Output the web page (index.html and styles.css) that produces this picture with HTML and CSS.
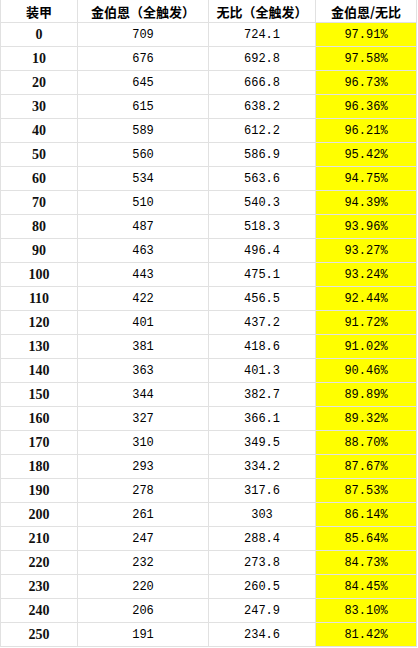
FILE: index.html
```html
<!DOCTYPE html>
<html lang="zh">
<head>
<meta charset="utf-8">
<title>装甲对比</title>
<link rel="stylesheet" href="styles.css">
</head>
<body>
<div class="sheet">
  <div class="cell head">装甲</div><div class="cell head">金伯恩（全触发）</div><div class="cell head">无比（全触发）</div><div class="cell head">金伯恩/无比</div>
  <div class="cell arm">0</div><div class="cell num">709</div><div class="cell num">724.1</div><div class="cell num pct">97.91%</div>
  <div class="cell arm">10</div><div class="cell num">676</div><div class="cell num">692.8</div><div class="cell num pct">97.58%</div>
  <div class="cell arm">20</div><div class="cell num">645</div><div class="cell num">666.8</div><div class="cell num pct">96.73%</div>
  <div class="cell arm">30</div><div class="cell num">615</div><div class="cell num">638.2</div><div class="cell num pct">96.36%</div>
  <div class="cell arm">40</div><div class="cell num">589</div><div class="cell num">612.2</div><div class="cell num pct">96.21%</div>
  <div class="cell arm">50</div><div class="cell num">560</div><div class="cell num">586.9</div><div class="cell num pct">95.42%</div>
  <div class="cell arm">60</div><div class="cell num">534</div><div class="cell num">563.6</div><div class="cell num pct">94.75%</div>
  <div class="cell arm">70</div><div class="cell num">510</div><div class="cell num">540.3</div><div class="cell num pct">94.39%</div>
  <div class="cell arm">80</div><div class="cell num">487</div><div class="cell num">518.3</div><div class="cell num pct">93.96%</div>
  <div class="cell arm">90</div><div class="cell num">463</div><div class="cell num">496.4</div><div class="cell num pct">93.27%</div>
  <div class="cell arm">100</div><div class="cell num">443</div><div class="cell num">475.1</div><div class="cell num pct">93.24%</div>
  <div class="cell arm">110</div><div class="cell num">422</div><div class="cell num">456.5</div><div class="cell num pct">92.44%</div>
  <div class="cell arm">120</div><div class="cell num">401</div><div class="cell num">437.2</div><div class="cell num pct">91.72%</div>
  <div class="cell arm">130</div><div class="cell num">381</div><div class="cell num">418.6</div><div class="cell num pct">91.02%</div>
  <div class="cell arm">140</div><div class="cell num">363</div><div class="cell num">401.3</div><div class="cell num pct">90.46%</div>
  <div class="cell arm">150</div><div class="cell num">344</div><div class="cell num">382.7</div><div class="cell num pct">89.89%</div>
  <div class="cell arm">160</div><div class="cell num">327</div><div class="cell num">366.1</div><div class="cell num pct">89.32%</div>
  <div class="cell arm">170</div><div class="cell num">310</div><div class="cell num">349.5</div><div class="cell num pct">88.70%</div>
  <div class="cell arm">180</div><div class="cell num">293</div><div class="cell num">334.2</div><div class="cell num pct">87.67%</div>
  <div class="cell arm">190</div><div class="cell num">278</div><div class="cell num">317.6</div><div class="cell num pct">87.53%</div>
  <div class="cell arm">200</div><div class="cell num">261</div><div class="cell num">303</div><div class="cell num pct">86.14%</div>
  <div class="cell arm">210</div><div class="cell num">247</div><div class="cell num">288.4</div><div class="cell num pct">85.64%</div>
  <div class="cell arm">220</div><div class="cell num">232</div><div class="cell num">273.8</div><div class="cell num pct">84.73%</div>
  <div class="cell arm">230</div><div class="cell num">220</div><div class="cell num">260.5</div><div class="cell num pct">84.45%</div>
  <div class="cell arm">240</div><div class="cell num">206</div><div class="cell num">247.9</div><div class="cell num pct">83.10%</div>
  <div class="cell arm">250</div><div class="cell num">191</div><div class="cell num">234.6</div><div class="cell num pct">81.42%</div>
</div>
</body>
</html>
```
FILE: styles.css
```css
html, body {
  margin: 0;
  padding: 0;
  background: #ffffff;
}
.sheet {
  display: grid;
  grid-template-columns: 76px 130px 106px 100px;
  grid-template-rows: 22px;
  grid-auto-rows: 23px;
  gap: 1px;
  padding: 0 1px 1px 1px;
  width: 415px;
  background: #e1e1e1;
  color: #000;
}
.cell {
  background: #ffffff;
  display: flex;
  align-items: center;
  justify-content: center;
  white-space: nowrap;
}
.head {
  font-family: "Noto Sans CJK SC", sans-serif;
  font-weight: 700;
  font-size: 13px;
}
.arm {
  font-family: "Liberation Serif", serif;
  font-weight: 700;
  font-size: 14px;
  color: #111;
}
.num {
  font-family: "Liberation Mono", monospace;
  font-size: 12px;
}
.pct {
  background: #ffff00;
}
```
